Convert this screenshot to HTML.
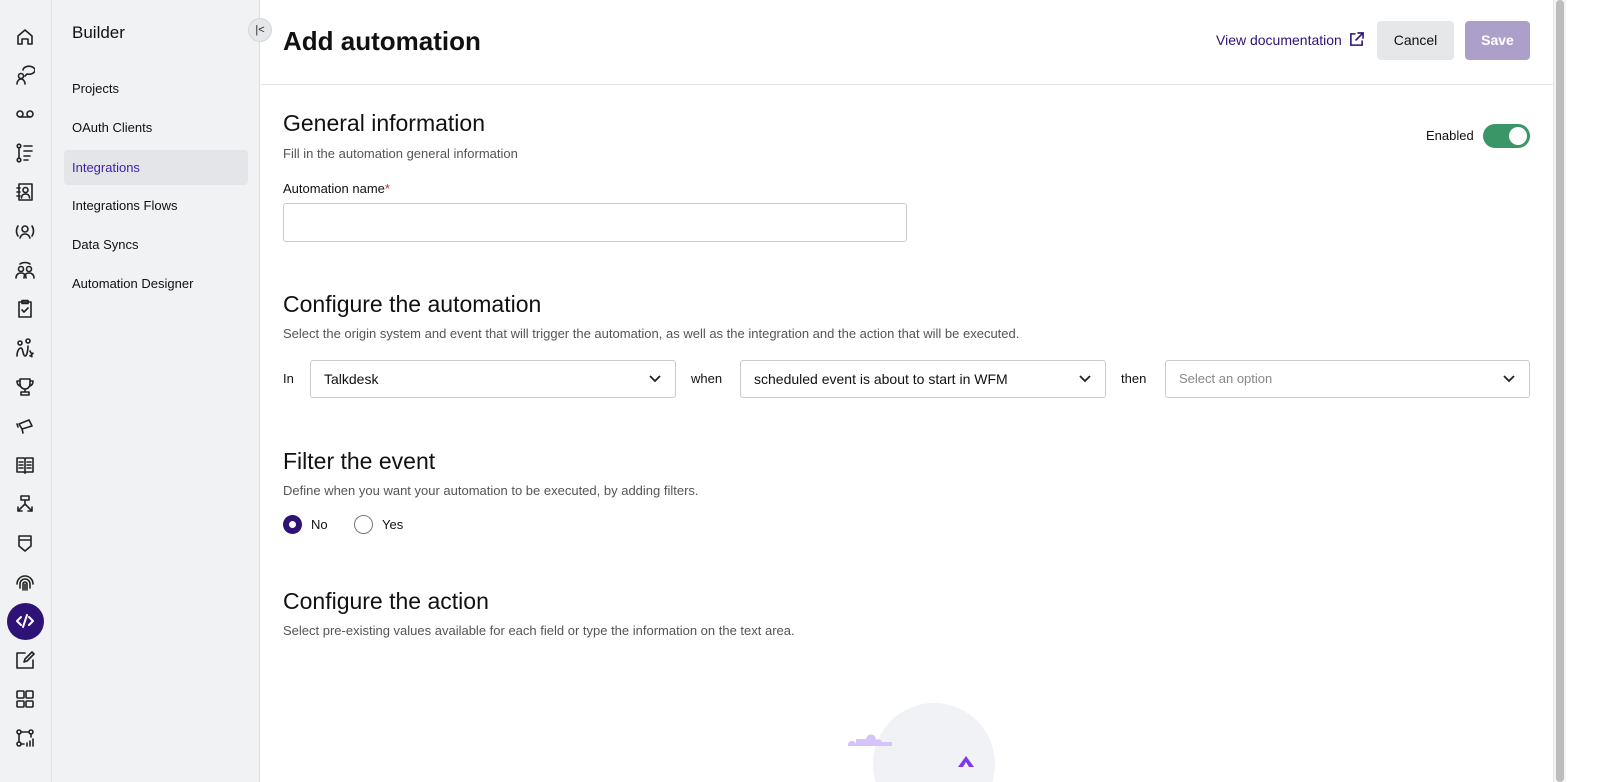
<!DOCTYPE html>
<html style="overflow:hidden;height:782px"><head><meta charset="utf-8"><style>
*{box-sizing:border-box;margin:0;padding:0}
body{width:1600px;height:782px;overflow:hidden;font-family:"Liberation Sans",Arial,sans-serif;color:#111;background:#fff;position:relative}
.rail{position:absolute;left:0;top:0;width:52px;height:782px;background:#f1f2f4;border-right:1px solid #e1e2e5}
.rail svg{position:absolute;left:15px;width:20px;height:20px;fill:none;stroke:#222;stroke-width:1.6;stroke-linecap:round;stroke-linejoin:round}
.act{position:absolute;left:7px;top:603px;width:37px;height:37px;border-radius:50%;background:#2e1275}
.side{position:absolute;left:52px;top:0;width:208px;height:782px;background:#f1f2f4;border-right:1px solid #dcdde0}
.side h2{position:absolute;left:20px;top:23px;font-size:17px;font-weight:500}
.side a{position:absolute;left:12px;width:184px;height:35px;padding-left:8px;line-height:35px;font-size:13px;font-weight:500;border-radius:4px;color:#111}
.side a.on{background:#e4e5e8;color:#3d1fa8}
.coll{position:absolute;left:248px;top:18px;width:24px;height:24px;border-radius:50%;background:#e6e7ea;border:1px solid #d5d6d9;font-size:11px;text-align:center;line-height:22px;color:#222}
.hdr{position:absolute;left:261px;top:0;width:1292px;height:85px;border-bottom:1px solid #e4e5e8}
.hdr h1{position:absolute;left:22px;top:26px;font-size:26px;font-weight:700}
.doc{position:absolute;left:955px;top:32px;font-size:14px;color:#2e1275}
.btn{position:absolute;top:21px;height:39px;border-radius:4px;font-size:14px;text-align:center;line-height:39px;font-weight:500}
.scroll{position:absolute;left:1553px;top:0;width:13px;height:782px;background:#f4f4f4;border-left:1px solid #e8e8e8}
.scroll div{position:absolute;left:2px;top:0;width:8px;height:782px;background:#bdbdbd;border-radius:4px}
.m{position:absolute;left:283px}
.h{font-size:23px;font-weight:400}
.d{font-size:13px;color:#555}
.lbl{font-size:13px;font-weight:500}
.sel{position:absolute;top:360px;height:38px;border:1px solid #c9cacd;border-radius:3px;font-size:14px;line-height:36px;padding-left:13px}
.sel svg{position:absolute;right:14px;top:13px;width:12px;height:9px;fill:none;stroke:#222;stroke-width:1.8}
.clip{position:absolute;left:261px;top:640px;width:1292px;height:142px;overflow:hidden}
</style></head><body>
<div class="rail">
<svg style="top:27px" viewBox="0 0 20 20"><path d="M3 9 10 3l7 6v8h-4v-5H7v5H3z"/></svg>
<svg style="top:65px" viewBox="0 0 20 20"><circle cx="6" cy="11" r="2.5"/><path d="M2 19c0-3 2-5 4-5s4 2 4 5M8 5a6 4 0 1 1 4 4l-2 2"/></svg>
<svg style="top:104px" viewBox="0 0 20 20"><circle cx="5" cy="10" r="3"/><circle cx="15" cy="10" r="3"/><path d="M5 13h10"/></svg>
<svg style="top:143px" viewBox="0 0 20 20"><circle cx="4" cy="3" r="1.8"/><circle cx="4" cy="17" r="1.8"/><path d="M4 5v10M9 3h8M9 8h8M9 13h6M9 17h4"/></svg>
<svg style="top:182px" viewBox="0 0 20 20"><rect x="4" y="2" width="13" height="16"/><circle cx="10.5" cy="8" r="2.5"/><path d="M6.5 16c0-3 2-4 4-4s4 1 4 4M2 6h3M2 10h3M2 14h3"/></svg>
<svg style="top:221px" viewBox="0 0 20 20"><circle cx="10" cy="8" r="3"/><path d="M5 17c1-3 3-4 5-4s4 1 5 4M3 5a9 9 0 0 0 0 10M17 5a9 9 0 0 1 0 10"/></svg>
<svg style="top:260px" viewBox="0 0 20 20"><circle cx="6" cy="9" r="2.5"/><circle cx="14" cy="9" r="2.5"/><path d="M1 18c0-3 2-5 5-5s5 2 5 5M9 18c0-3 2-5 5-5s5 2 5 5M5 4a7 5 0 0 1 10 0"/></svg>
<svg style="top:299px" viewBox="0 0 20 20"><rect x="4" y="3" width="12" height="15"/><rect x="7" y="1.5" width="6" height="3"/><path d="M7 11l2 2 4-4"/></svg>
<svg style="top:338px" viewBox="0 0 20 20"><circle cx="5" cy="5" r="2"/><circle cx="13" cy="3" r="2"/><path d="M2 18c0-5 2-8 4-8s2 8 4 8 3-6 3-10M15 13l1 2 2 .3-1.5 1.4.4 2L15 17.7"/></svg>
<svg style="top:377px" viewBox="0 0 20 20"><path d="M5 2h10v5a5 5 0 0 1-10 0zM5 4H2c0 3 1 4 3 5M15 4h3c0 3-1 4-3 5M10 12v3M6 18h8v-3H6z"/></svg>
<svg style="top:416px" viewBox="0 0 20 20"><path d="M4 8l10-4 3 6-10 3zM7 13l1 4M2 8l1 3"/></svg>
<svg style="top:455px" viewBox="0 0 20 20"><path d="M2 3h7l1 1 1-1h7v14h-7l-1 1-1-1H2zM10 4v13M4 7h4M4 10h4M4 13h4M12 7h4M12 10h4M12 13h4"/></svg>
<svg style="top:494px" viewBox="0 0 20 20"><rect x="6" y="2" width="8" height="4"/><path d="M10 6v4L3 17M10 10l7 7M3 13v4h4M17 13v4h-4"/></svg>
<svg style="top:533px" viewBox="0 0 20 20"><path d="M4 3h12v10l-6 5-6-5zM4 7h12"/></svg>
<svg style="top:572px" viewBox="0 0 20 20"><path d="M2 12a8 8 0 0 1 16 0M5 16v-4a5 5 0 0 1 10 0v4M8 18v-6a2 2 0 0 1 4 0v6M10 12v6"/></svg>
<div class="act"></div>
<svg style="top:611px;stroke:#fff;stroke-width:2" viewBox="0 0 20 20"><path d="M6 6l-4 4 4 4M14 6l4 4-4 4M12 4 8 16"/></svg>
<svg style="top:650px" viewBox="0 0 20 20"><path d="M10 3H2v15h16v-8M9 12l1-3 7-7 2 2-7 7z"/></svg>
<svg style="top:689px" viewBox="0 0 20 20"><rect x="2" y="2" width="7" height="7" rx="1"/><rect x="11" y="2" width="7" height="7" rx="1"/><rect x="2" y="12" width="7" height="6" rx="1"/><rect x="11" y="12" width="7" height="6" rx="1"/></svg>
<svg style="top:728px" viewBox="0 0 20 20"><circle cx="4" cy="4" r="2"/><circle cx="16" cy="4" r="2"/><circle cx="4" cy="16" r="2"/><path d="M6 4h8M4 6v8M16 6v3M6 16h3M12 18v-3M15 18v-5M18 18v-7"/></svg>
</div>
<div class="side">
<h2>Builder</h2>
<a style="top:71px">Projects</a>
<a style="top:110px">OAuth Clients</a>
<a class="on" style="top:150px">Integrations</a>
<a style="top:188px">Integrations Flows</a>
<a style="top:227px">Data Syncs</a>
<a style="top:266px">Automation Designer</a>
</div>
<div class="coll">|&lt;</div>
<div class="hdr"><h1>Add automation</h1>
<div class="doc">View documentation <svg width="15" height="15" viewBox="0 0 16 16" style="vertical-align:-2px;margin-left:3px" fill="none" stroke="#2e1275" stroke-width="1.7"><path d="M7 2H2v12h12V9M9 1h6v6M15 1 7 9"/></svg></div>
<div class="btn" style="left:1116px;width:77px;background:#e6e7e9;color:#111">Cancel</div>
<div class="btn" style="left:1204px;width:65px;background:#ac9fca;color:#fff;font-weight:700">Save</div>
</div>
<div class="scroll"><div></div></div>

<div class="m h" style="top:110px">General information</div>
<div class="m d" style="top:146px">Fill in the automation general information</div>
<div style="position:absolute;left:1426px;top:128px;font-size:13px;font-weight:500">Enabled</div>
<div style="position:absolute;left:1483px;top:124px;width:47px;height:24px;border-radius:12px;background:#3a9567"><div style="position:absolute;right:3px;top:3px;width:18px;height:18px;border-radius:50%;background:#fff"></div></div>
<div class="m lbl" style="top:181px">Automation name<span style="color:#c62828">*</span></div>
<div class="m" style="top:203px;width:624px;height:39px;border:1px solid #c9cacd;border-radius:3px"></div>

<div class="m h" style="top:291px">Configure the automation</div>
<div class="m d" style="top:326px">Select the origin system and event that will trigger the automation, as well as the integration and the action that will be executed.</div>
<div class="m lbl" style="top:371px">In</div>
<div class="sel" style="left:310px;width:366px">Talkdesk<svg viewBox="0 0 12 9"><path d="M1 2l5 5 5-5"/></svg></div>
<div class="lbl" style="position:absolute;left:691px;top:371px">when</div>
<div class="sel" style="left:740px;width:366px">scheduled event is about to start in WFM<svg viewBox="0 0 12 9"><path d="M1 2l5 5 5-5"/></svg></div>
<div class="lbl" style="position:absolute;left:1121px;top:371px">then</div>
<div class="sel" style="left:1165px;width:365px;color:#888;font-size:13px">Select an option<svg viewBox="0 0 12 9"><path d="M1 2l5 5 5-5"/></svg></div>

<div class="m h" style="top:448px">Filter the event</div>
<div class="m d" style="top:483px">Define when you want your automation to be executed, by adding filters.</div>
<div style="position:absolute;left:283px;top:515px;width:19px;height:19px;border-radius:50%;background:#2e1275"><div style="position:absolute;left:6px;top:6px;width:7px;height:7px;border-radius:50%;background:#fff"></div></div>
<div class="lbl" style="position:absolute;left:311px;top:517px">No</div>
<div style="position:absolute;left:354px;top:515px;width:19px;height:19px;border-radius:50%;border:1.5px solid #777"></div>
<div class="lbl" style="position:absolute;left:382px;top:517px">Yes</div>

<div class="m h" style="top:588px">Configure the action</div>
<div class="m d" style="top:623px">Select pre-existing values available for each field or type the information on the text area.</div>
<div class="clip">
<div style="position:absolute;left:612px;top:63px;width:122px;height:122px;border-radius:50%;background:#f1f2f5"></div>
<svg style="position:absolute;left:585px;top:88px" width="50" height="20" viewBox="0 0 50 20"><path d="M2 18a4 4 0 0 1 8-2v-5h10a5 5 0 0 1 10 1 4 4 0 0 1 6 2h10v4z" fill="#d6c3f7"/></svg>
<svg style="position:absolute;left:694px;top:115px" width="22" height="12" viewBox="0 0 22 12"><path d="M11 1 3 12h5l3-5 3 5h5z" fill="#7c3aed"/></svg>
</div>
</body></html>
